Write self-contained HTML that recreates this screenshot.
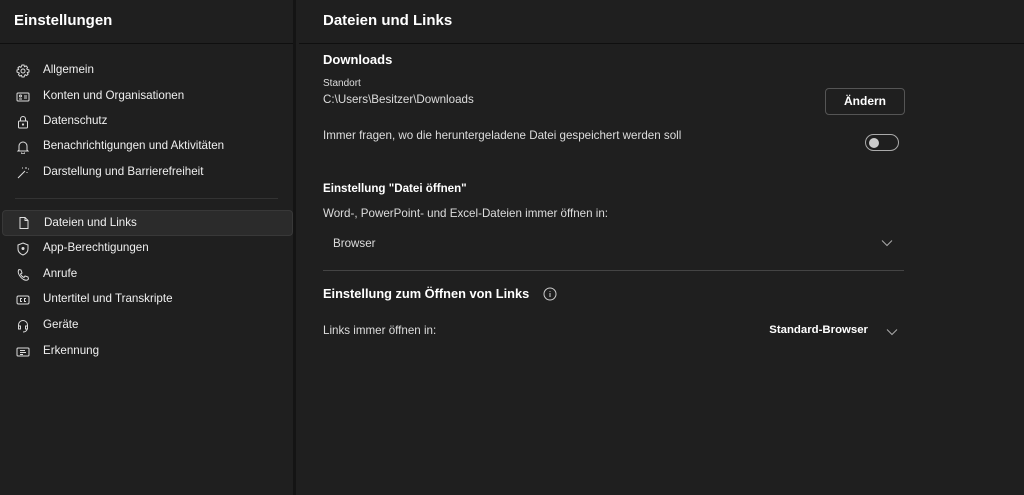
<!DOCTYPE html>
<html><head><meta charset="utf-8"><style>
*{margin:0;padding:0;box-sizing:border-box}
body{width:1024px;height:495px;background:#1f1f1f;font-family:"Segoe UI","Liberation Sans",sans-serif;color:#fff;position:relative;overflow:hidden;font-size:11.6px}
.side{position:absolute;left:0;top:0;width:296px;height:495px;background:#1f1f1f;border-right:3px solid #141414}
.hdr{position:absolute;top:0;height:44px;border-bottom:1px solid #0f0f0f}
.t{position:absolute;white-space:nowrap}
.item{position:absolute;left:0;width:293px;height:26px}
.item .t{left:43px;top:5px;font-size:11.6px;color:#f0f0f0}
.item svg{position:absolute;left:16px;top:6px}
.sel{left:2px;width:291px;background:#2b2b2b;border:1px solid #383838;border-radius:4px}
.sel .t{left:41px;top:5px}
.sel svg{left:14px;top:5px}
</style></head><body>
<div class="side">
 <div class="hdr" style="left:0;width:293px"></div>
 <div class="t" style="left:14px;top:12px;font-size:15px;font-weight:bold">Einstellungen</div>
 <div class="item" style="top:58px"><svg width="14" height="14" viewBox="0 0 14 14" fill="none" stroke="#ddd" stroke-width="1"><circle cx="7" cy="7" r="2"/><path d="M6 1h2l.5 1.7 1.6-.8 1.4 1.4-.8 1.6L13 6v2l-1.7.5.8 1.6-1.4 1.4-1.6-.8L8 13H6l-.5-1.7-1.6.8-1.4-1.4.8-1.6L1 8V6l1.7-.5-.8-1.6 1.4-1.4 1.6.8z"/></svg><span class="t">Allgemein</span></div>
 <div class="item" style="top:84px"><svg width="14" height="14" viewBox="0 0 14 14" fill="none" stroke="#ddd"><rect x="1" y="3" width="12" height="8" rx="1"/><circle cx="4.5" cy="6" r="1"/><path d="M3 9h3M8 6h3M8 8h3"/></svg><span class="t">Konten und Organisationen</span></div>
 <div class="item" style="top:109px"><svg width="14" height="14" viewBox="0 0 14 14" fill="none" stroke="#ddd"><rect x="2.5" y="6" width="9" height="7" rx="1"/><path d="M4.5 6V4a2.5 2.5 0 0 1 5 0v2"/><circle cx="7" cy="9.5" r=".6" fill="#ddd"/></svg><span class="t">Datenschutz</span></div>
 <div class="item" style="top:134px"><svg width="14" height="14" viewBox="0 0 14 14" fill="none" stroke="#ddd"><path d="M3 10V6a4 4 0 0 1 8 0v4l1 1H2zM5.5 12.5a1.5 1.5 0 0 0 3 0"/></svg><span class="t">Benachrichtigungen und Aktivitäten</span></div>
 <div class="item" style="top:160px"><svg width="14" height="14" viewBox="0 0 14 14" fill="none" stroke="#ddd"><path d="M2 12l7-7M10 1v2M12 3h1M11 6v1M6 2h1"/></svg><span class="t">Darstellung und Barrierefreiheit</span></div>
 <div style="position:absolute;left:15px;top:198px;width:263px;height:1px;background:#333"></div>
 <div class="item sel" style="top:210px"><svg width="14" height="14" viewBox="0 0 14 14" fill="none" stroke="#ddd"><path d="M3 1.5h5l3 3v8H3z M8 1.5v3h3"/></svg><span class="t">Dateien und Links</span></div>
 <div class="item" style="top:236px"><svg width="14" height="14" viewBox="0 0 14 14" fill="none" stroke="#ddd"><path d="M7 1l5 2v4c0 3-2.5 5-5 6-2.5-1-5-3-5-6V3z"/><circle cx="7" cy="6.5" r="1" fill="#ddd"/></svg><span class="t">App-Berechtigungen</span></div>
 <div class="item" style="top:262px"><svg width="14" height="14" viewBox="0 0 14 14" fill="none" stroke="#ddd"><path d="M3 1.5l2 .5 1 3-1.5 1c.7 1.7 1.8 2.8 3.5 3.5l1-1.5 3 1 .5 2c-1 1.5-3 1.5-5 .5-2.5-1.5-4-3.5-5-6C2 3.5 2 2.5 3 1.5z"/></svg><span class="t">Anrufe</span></div>
 <div class="item" style="top:287px"><svg width="14" height="14" viewBox="0 0 14 14" fill="none" stroke="#ddd"><rect x="1" y="3" width="12" height="8" rx="1.5"/><path d="M6 5.5H4.5v3H6M10 5.5H8.5v3H10"/></svg><span class="t">Untertitel und Transkripte</span></div>
 <div class="item" style="top:313px"><svg width="14" height="14" viewBox="0 0 14 14" fill="none" stroke="#ddd"><path d="M2.5 9V6a4.5 4.5 0 0 1 9 0v3M2.5 7h2v3h-2zM9.5 7h2v3h-2zM11 10c0 2-2 3-4 3"/></svg><span class="t">Geräte</span></div>
 <div class="item" style="top:339px"><svg width="14" height="14" viewBox="0 0 14 14" fill="none" stroke="#ddd"><rect x="1" y="3" width="12" height="8" rx="1"/><path d="M4 5.5h5M4 7.5h6M4 9.5h3"/></svg><span class="t">Erkennung</span></div>
</div>
<div class="hdr" style="left:299px;width:725px"></div>
<div class="t" style="left:323px;top:12px;font-size:15px;font-weight:bold">Dateien und Links</div>
<div class="t" style="left:323px;top:52px;font-size:13px;font-weight:bold">Downloads</div>
<div class="t" style="left:323px;top:78px;font-size:10px;color:#ddd">Standort</div>
<div class="t" style="left:323px;top:93px;color:#ddd">C:\Users\Besitzer\Downloads</div>
<div style="position:absolute;left:825px;top:88px;width:80px;height:27px;border:1px solid #555;border-radius:4px;background:#1f1f1f;font-size:12px;font-weight:bold;text-align:center;line-height:25px">Ändern</div>
<div class="t" style="left:323px;top:129px;color:#ddd">Immer fragen, wo die heruntergeladene Datei gespeichert werden soll</div>
<div style="position:absolute;left:865px;top:134px;width:34px;height:17px;border:1px solid #aaa;border-radius:9px"><div style="position:absolute;left:3px;top:3px;width:10px;height:10px;border-radius:50%;background:#ccc"></div></div>
<div class="t" style="left:323px;top:182px;font-weight:bold">Einstellung "Datei öffnen"</div>
<div class="t" style="left:323px;top:207px;color:#ddd">Word-, PowerPoint- und Excel-Dateien immer öffnen in:</div>
<div class="t" style="left:333px;top:237px;color:#ddd">Browser</div>
<svg style="position:absolute;left:881px;top:239px" width="12" height="8" viewBox="0 0 12 8" fill="none" stroke="#aaa"><path d="M1 1.5l5 5 5-5"/></svg>
<div style="position:absolute;left:323px;top:270px;width:581px;height:1px;background:#444"></div>
<div class="t" style="left:323px;top:286px;font-size:12.8px;font-weight:bold">Einstellung zum Öffnen von Links</div>
<svg style="position:absolute;left:543px;top:287px" width="14" height="14" viewBox="0 0 14 14" fill="none" stroke="#ccc"><circle cx="7" cy="7" r="6"/><path d="M7 6v4M7 4v.8"/></svg>
<div class="t" style="left:323px;top:324px;color:#ddd">Links immer öffnen in:</div>
<div class="t" style="right:156px;top:324px;font-size:11.4px;font-weight:bold">Standard-Browser</div>
<svg style="position:absolute;left:886px;top:328px" width="12" height="8" viewBox="0 0 12 8" fill="none" stroke="#aaa"><path d="M1 1.5l5 5 5-5"/></svg>
</body></html>
